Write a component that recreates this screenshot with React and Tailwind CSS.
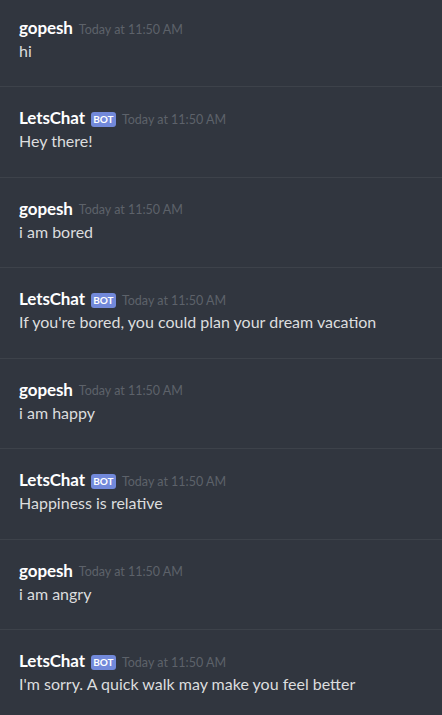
import React from 'react';

const messages = [
  { author: 'gopesh', bot: false, text: 'hi' },
  { author: 'LetsChat', bot: true, text: 'Hey there!' },
  { author: 'gopesh', bot: false, text: 'i am bored' },
  { author: 'LetsChat', bot: true, text: "If you're bored, you could plan your dream vacation" },
  { author: 'gopesh', bot: false, text: 'i am happy' },
  { author: 'LetsChat', bot: true, text: 'Happiness is relative' },
  { author: 'gopesh', bot: false, text: 'i am angry' },
  { author: 'LetsChat', bot: true, text: "I'm sorry. A quick walk may make you feel better" },
];

const Message = ({ author, bot, text, first }) => (
  <div
    className={`flex flex-col px-[19px] border-b border-[#3d424a] ${
      first ? 'h-[87px] pt-[17px]' : 'h-[90.5px] pt-[20px]'
    }`}
  >
    <div className="flex items-center h-[22px]">
      <span className="text-[17px] font-bold text-white tracking-[-0.1px]">{author}</span>
      {bot && (
        <span className="ml-[6px] mt-[2px] h-[15px] w-[25px] text-center rounded-[3px] bg-[#7289da] text-white text-[10px] font-bold leading-[15px]">
          BOT
        </span>
      )}
      <span className="ml-[6px] text-[12.5px] text-[#5d626a] mt-[4px]">Today at 11:50 AM</span>
    </div>
    <div className="text-[16px] leading-[24px] text-[#dcddde]">{text}</div>
  </div>
);

export default function App() {
  return (
    <div className="w-[442px] h-[715px] overflow-hidden bg-[#31363f]" style={{ fontFamily: 'Lato, "Noto Sans", sans-serif' }}>
      {messages.map((m, i) => (
        <Message key={i} {...m} first={i === 0} />
      ))}
    </div>
  );
}
